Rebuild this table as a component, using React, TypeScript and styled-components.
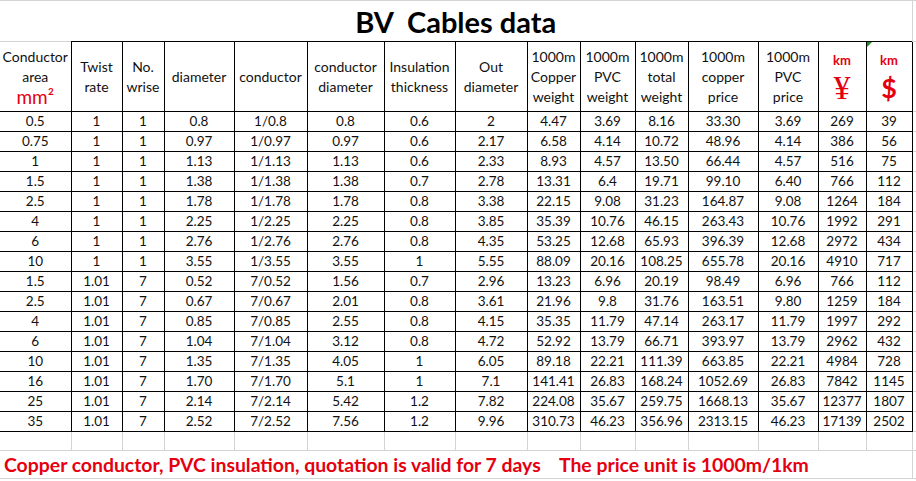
import React from "react";
import styled, { createGlobalStyle } from "styled-components";

const Global = createGlobalStyle`
  html, body { margin: 0; padding: 0; background: #fff; overflow: hidden; }
  body { font-family: Lato, "Liberation Sans", sans-serif; color: #111; }
`;

const GRID = "#d4d4d4";
const INK = "#000";
const RED = "#e5000f";

const colWidths = [71, 51, 42, 70, 73, 77, 71, 72, 53, 55, 53, 70, 60, 48, 46];
const EXTRA = 4;

const Sheet = styled.table`
  border-collapse: collapse;
  table-layout: fixed;
  width: ${colWidths.reduce((a, b) => a + b, 0) + EXTRA}px;
  font-size: 13.5px;
  line-height: 1;
`;

const StripCell = styled.td`
  height: 0px;
  padding: 0;
  border-left: 1px solid ${GRID};
  border-bottom: 1px solid ${GRID};
  &:first-child { border-left: none; }
`;

const TitleCell = styled.td`
  height: 40px;
  padding: 0;
  text-align: center;
  vertical-align: middle;
  font-weight: 700;
  font-size: 29px;
  white-space: pre;
  color: #000;
  border-top: 1px solid ${GRID};
  border-bottom: none;
`;

const SideCell = styled.td`
  padding: 0;
  border-left: 1px solid ${GRID};
  border-top: 1px solid ${GRID};
  border-bottom: 1px solid ${GRID};
`;

const HeadCell = styled.th<{ $first?: boolean; $mark?: boolean }>`
  height: 69px;
  padding: 0;
  font-weight: 400;
  font-size: 14px;
  line-height: 20px;
  text-align: center;
  vertical-align: middle;
  border: 1px solid ${INK};
  border-top-color: ${(p) => (p.$first ? GRID : INK)};
  border-left: ${(p) => (p.$first ? "none" : `1px solid ${INK}`)};
  position: ${(p) => (p.$mark ? "relative" : "static")};
  &::before {
    content: "";
    display: ${(p) => (p.$mark ? "block" : "none")};
    position: absolute;
    left: 0;
    top: 0;
    border-top: 5px solid #1f8a2e;
    border-right: 5px solid transparent;
  }
`;

const Unit = styled.span`
  display: block;
  color: ${RED};
  font-size: 19px;
  line-height: 20px;
`;

const Km = styled.span`
  display: block;
  color: ${RED};
  font-weight: 700;
  font-size: 13px;
  line-height: 18px;
  margin-bottom: 3px;
`;

const Yen = styled.span`
  display: block;
  color: ${RED};
  font-family: "Liberation Serif", "DejaVu Serif", serif;
  font-size: 34px;
  line-height: 31px;
`;

const Dollar = styled.span`
  display: block;
  color: ${RED};
  font-weight: 700;
  font-size: 27px;
  line-height: 31px;
`;

const DataCell = styled.td<{ $first?: boolean }>`
  height: 19px;
  padding: 0;
  text-align: center;
  vertical-align: middle;
  white-space: nowrap;
  border: 1px solid ${INK};
  border-left: ${(p) => (p.$first ? "none" : `1px solid ${INK}`)};
`;

const BlankCell = styled.td<{ $first?: boolean }>`
  height: 18px;
  padding: 0;
  border: 1px solid ${GRID};
  border-left: ${(p) => (p.$first ? "none" : `1px solid ${GRID}`)};
`;

const NoteCell = styled.td`
  height: 27px;
  padding: 0 0 0 4px;
  color: ${RED};
  font-weight: 700;
  font-size: 19.4px;
  white-space: pre;
  vertical-align: middle;
  border-top: 1px solid ${GRID};
  border-bottom: 1px solid ${GRID};
`;

const rows: string[][] = [
  ["0.5", "1", "1", "0.8", "1/0.8", "0.8", "0.6", "2", "4.47", "3.69", "8.16", "33.30", "3.69", "269", "39"],
  ["0.75", "1", "1", "0.97", "1/0.97", "0.97", "0.6", "2.17", "6.58", "4.14", "10.72", "48.96", "4.14", "386", "56"],
  ["1", "1", "1", "1.13", "1/1.13", "1.13", "0.6", "2.33", "8.93", "4.57", "13.50", "66.44", "4.57", "516", "75"],
  ["1.5", "1", "1", "1.38", "1/1.38", "1.38", "0.7", "2.78", "13.31", "6.4", "19.71", "99.10", "6.40", "766", "112"],
  ["2.5", "1", "1", "1.78", "1/1.78", "1.78", "0.8", "3.38", "22.15", "9.08", "31.23", "164.87", "9.08", "1264", "184"],
  ["4", "1", "1", "2.25", "1/2.25", "2.25", "0.8", "3.85", "35.39", "10.76", "46.15", "263.43", "10.76", "1992", "291"],
  ["6", "1", "1", "2.76", "1/2.76", "2.76", "0.8", "4.35", "53.25", "12.68", "65.93", "396.39", "12.68", "2972", "434"],
  ["10", "1", "1", "3.55", "1/3.55", "3.55", "1", "5.55", "88.09", "20.16", "108.25", "655.78", "20.16", "4910", "717"],
  ["1.5", "1.01", "7", "0.52", "7/0.52", "1.56", "0.7", "2.96", "13.23", "6.96", "20.19", "98.49", "6.96", "766", "112"],
  ["2.5", "1.01", "7", "0.67", "7/0.67", "2.01", "0.8", "3.61", "21.96", "9.8", "31.76", "163.51", "9.80", "1259", "184"],
  ["4", "1.01", "7", "0.85", "7/0.85", "2.55", "0.8", "4.15", "35.35", "11.79", "47.14", "263.17", "11.79", "1997", "292"],
  ["6", "1.01", "7", "1.04", "7/1.04", "3.12", "0.8", "4.72", "52.92", "13.79", "66.71", "393.97", "13.79", "2962", "432"],
  ["10", "1.01", "7", "1.35", "7/1.35", "4.05", "1", "6.05", "89.18", "22.21", "111.39", "663.85", "22.21", "4984", "728"],
  ["16", "1.01", "7", "1.70", "7/1.70", "5.1", "1", "7.1", "141.41", "26.83", "168.24", "1052.69", "26.83", "7842", "1145"],
  ["25", "1.01", "7", "2.14", "7/2.14", "5.42", "1.2", "7.82", "224.08", "35.67", "259.75", "1668.13", "35.67", "12377", "1807"],
  ["35", "1.01", "7", "2.52", "7/2.52", "7.56", "1.2", "9.96", "310.73", "46.23", "356.96", "2313.15", "46.23", "17139", "2502"],
];

const headers: React.ReactNode[] = [
  <>Conductor<br />area<Unit>mm²</Unit></>,
  <>Twist<br />rate</>,
  <>No.<br />wrise</>,
  <>diameter</>,
  <>conductor</>,
  <>conductor<br />diameter</>,
  <>Insulation<br />thickness</>,
  <>Out<br />diameter</>,
  <>1000m<br />Copper<br />weight</>,
  <>1000m<br />PVC<br />weight</>,
  <>1000m<br />total<br />weight</>,
  <>1000m<br />copper<br />price</>,
  <>1000m<br />PVC<br />price</>,
  <><Km>km</Km><Yen>¥</Yen></>,
  <><Km>km</Km><Dollar>$</Dollar></>,
];

export default function App() {
  const allCols = [...colWidths, EXTRA];
  return (
    <>
      <Global />
      <Sheet>
        <colgroup>
          {allCols.map((w, i) => (
            <col key={i} style={{ width: w }} />
          ))}
        </colgroup>
        <tbody>
          <tr>
            {allCols.map((_, i) => (
              <StripCell key={i} />
            ))}
          </tr>
          <tr>
            <TitleCell colSpan={colWidths.length}>BV  Cables data</TitleCell>
            <SideCell />
          </tr>
          <tr>
            {headers.map((h, i) => (
              <HeadCell key={i} $first={i === 0} $mark={i === 14}>
                {h}
              </HeadCell>
            ))}
            <SideCell />
          </tr>
          {rows.map((r, ri) => (
            <tr key={ri}>
              {r.map((v, ci) => (
                <DataCell key={ci} $first={ci === 0}>
                  {v}
                </DataCell>
              ))}
              <SideCell />
            </tr>
          ))}
          <tr>
            {allCols.map((_, i) => (
              <BlankCell key={i} $first={i === 0} />
            ))}
          </tr>
          <tr>
            <NoteCell colSpan={colWidths.length}>
              {"Copper conductor, PVC insulation, quotation is valid for 7 days    The price unit is 1000m/1km"}
            </NoteCell>
            <SideCell />
          </tr>
        </tbody>
      </Sheet>
    </>
  );
}
